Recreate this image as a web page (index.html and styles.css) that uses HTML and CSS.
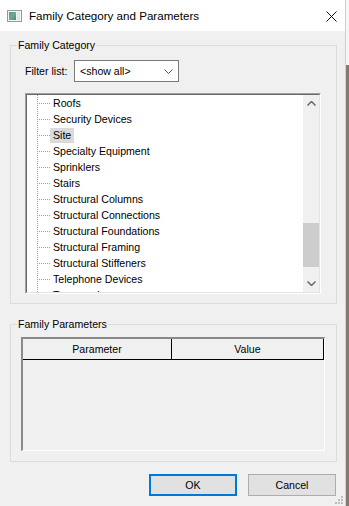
FILE: index.html
```html
<!DOCTYPE html>
<html lang="en">
<head>
    <meta charset="UTF-8">
    <meta name="viewport" content="width=device-width, initial-scale=1.0">
    <title>Family Category and Parameters</title>
    <link rel="stylesheet" href="styles.css">
</head>
<body>
    <div class="dialog">
        <!-- Title bar -->
        <div class="titlebar">
            <svg class="app-icon" width="15" height="12" viewBox="0 0 15 12">
                <defs>
                    <linearGradient id="pic" x1="0" y1="0" x2="1" y2="1">
                        <stop offset="0" stop-color="#4f8fc9"/>
                        <stop offset="0.5" stop-color="#6fae7e"/>
                        <stop offset="1" stop-color="#3f7fb0"/>
                    </linearGradient>
                </defs>
                <rect x="0.5" y="0.5" width="14" height="11" fill="#f4f4f4" stroke="#9a9a9a"/>
                <rect x="2" y="2" width="7" height="8" fill="url(#pic)"/>
                <rect x="10" y="2" width="3" height="8" fill="#dfe6ec"/>
            </svg>
            <span class="title">Family Category and Parameters</span>
            <svg class="close" width="11" height="11" viewBox="0 0 11 11">
                <path d="M0.5 0.5 L10.5 10.5 M10.5 0.5 L0.5 10.5" stroke="#111" stroke-width="1"/>
            </svg>
        </div>

        <div class="content">
            <fieldset class="group group-category">
                <legend>Family Category</legend>
                <div class="filter-row">
                    <label for="filter">Filter list:</label>
                    <div class="select" id="filter">
                        <span>&lt;show all&gt;</span>
                        <svg width="9" height="5" viewBox="0 0 9 5">
                            <path d="M0.5 0.5 L4.5 4.5 L8.5 0.5" fill="none" stroke="#555" stroke-width="1"/>
                        </svg>
                    </div>
                </div>
                <div class="listbox">
                    <div class="listbox-inner">
                        <ul class="tree">
                            <li><span>Roofs</span></li>
                            <li><span>Security Devices</span></li>
                            <li class="selected"><span>Site</span></li>
                            <li><span>Specialty Equipment</span></li>
                            <li><span>Sprinklers</span></li>
                            <li><span>Stairs</span></li>
                            <li><span>Structural Columns</span></li>
                            <li><span>Structural Connections</span></li>
                            <li><span>Structural Foundations</span></li>
                            <li><span>Structural Framing</span></li>
                            <li><span>Structural Stiffeners</span></li>
                            <li><span>Telephone Devices</span></li>
                            <li><span>Topography</span></li>
                        </ul>
                        <div class="scrollbar">
                            <div class="scroll-btn">
                                <svg width="9" height="5" viewBox="0 0 9 5">
                                    <path d="M0.5 4.5 L4.5 0.5 L8.5 4.5" fill="none" stroke="#606060" stroke-width="1.4"/>
                                </svg>
                            </div>
                            <div class="scroll-track">
                                <div class="scroll-thumb"></div>
                            </div>
                            <div class="scroll-btn">
                                <svg width="9" height="5" viewBox="0 0 9 5">
                                    <path d="M0.5 0.5 L4.5 4.5 L8.5 0.5" fill="none" stroke="#606060" stroke-width="1.4"/>
                                </svg>
                            </div>
                        </div>
                    </div>
                </div>
            </fieldset>

            <fieldset class="group group-params">
                <legend>Family Parameters</legend>
                <div class="grid">
                    <div class="grid-header">
                        <div class="cell cell-param">Parameter</div>
                        <div class="cell cell-value">Value</div>
                    </div>
                </div>
            </fieldset>

            <div class="buttons">
                <button class="btn btn-default">OK</button>
                <button class="btn">Cancel</button>
            </div>
        </div>

        <!-- resize grip -->
        <svg class="grip" width="8" height="8" viewBox="0 0 8 8">
            <rect x="6" y="0" width="2" height="2" fill="#bcbcbc"/>
            <rect x="3" y="3" width="2" height="2" fill="#bcbcbc"/>
            <rect x="6" y="3" width="2" height="2" fill="#bcbcbc"/>
            <rect x="0" y="6" width="2" height="2" fill="#bcbcbc"/>
            <rect x="3" y="6" width="2" height="2" fill="#bcbcbc"/>
            <rect x="6" y="6" width="2" height="2" fill="#bcbcbc"/>
        </svg>
    </div>
</body>
</html>
```

FILE: styles.css
```css
/* General styles */
body {
    font-family: "Liberation Sans", Arial, sans-serif;
    font-size: 10.6px;
    color: #000;
    margin: 0;
    padding: 0;
    width: 349px;
    height: 506px;
    overflow: hidden;
    background: linear-gradient(to bottom, #f6f6f6 65px, #857a6e 65px);
}
.dialog {
    position: relative;
    width: 346px;
    height: 506px;
    background: #f0f0f0;
    border-right: 1px solid #d0d0d0;
    box-sizing: border-box;
}

/* Title bar */
.titlebar {
    height: 31px;
    background: #fff;
    display: flex;
    align-items: center;
}
.app-icon {
    margin-left: 7px;
    margin-top: 1px;
}
.title {
    margin-left: 7px;
    font-size: 11.6px;
    flex: 1;
}
.close {
    margin-right: 8px;
    margin-top: 1px;
}

.content {
    padding: 0 8px 0 10px;
}

/* Group boxes */
.group {
    border: 1px solid #dcdcdc;
    margin: 0;
    padding: 0;
    min-width: 0;
}
.group legend {
    margin-left: 6px;
    padding: 0 1px;
    line-height: 15px;
}
.group-category {
    margin-top: 7px;
    padding-bottom: 9px;
}
.group-params {
    margin-top: 13px;
    padding-bottom: 10px;
}

.filter-row {
    display: flex;
    align-items: center;
    margin-top: 7px;
    padding-left: 14px;
}
.filter-row label {
    width: 49px;
}
.select {
    width: 105px;
    height: 22px;
    box-sizing: border-box;
    border: 1px solid #7a7a7a;
    background: #fff;
    display: flex;
    align-items: center;
    justify-content: space-between;
    padding: 0 5px 0 5px;
}

/* Tree list */
.listbox {
    margin: 11px 0 0 14px;
    width: 296px;
    height: 201px;
    box-sizing: border-box;
    border-top: 1px solid #a0a0a0;
    border-left: 1px solid #a0a0a0;
    border-right: 1px solid #fff;
    border-bottom: 1px solid #fff;
}
.listbox-inner {
    height: 100%;
    box-sizing: border-box;
    border-top: 1px solid #696969;
    border-left: 1px solid #696969;
    border-right: 1px solid #e3e3e3;
    border-bottom: 1px solid #e3e3e3;
    display: flex;
    background: #fff;
}
.tree {
    list-style: none;
    margin: 0;
    padding: 0;
    flex: 1;
    overflow: hidden;
    background-image: repeating-linear-gradient(to bottom, #a0a0a0 0 1px, transparent 1px 2px);
    background-size: 1px 100%;
    background-position: 10px 0;
    background-repeat: no-repeat;
}
.tree li {
    height: 16px;
    display: flex;
    align-items: center;
    white-space: nowrap;
}
.tree li::before {
    content: "";
    width: 13px;
    height: 1px;
    margin-left: 10px;
    background-image: repeating-linear-gradient(to right, #a0a0a0 0 1px, transparent 1px 2px);
}
.tree li span {
    padding: 0 3px;
    line-height: 15px;
}
.tree li.selected span {
    background: #dadada;
}

.scrollbar {
    width: 16px;
    background: #f0f0f0;
    display: flex;
    flex-direction: column;
}
.scroll-btn {
    height: 17px;
    display: flex;
    align-items: center;
    justify-content: center;
}
.scroll-track {
    flex: 1;
    padding-top: 111px;
}
.scroll-thumb {
    height: 44px;
    background: #cdcdcd;
}

/* Parameters grid */
.grid {
    margin: 5px 11px 0 10px;
    height: 114px;
    box-sizing: border-box;
    border-top: 2px solid #8a8a8a;
    border-left: 2px solid #8a8a8a;
    border-right: 1px solid #fff;
    border-bottom: 1px solid #fff;
}
.grid-header {
    display: flex;
    height: 21px;
    box-sizing: border-box;
    border-bottom: 1px solid #000;
}
.cell {
    display: flex;
    align-items: center;
    justify-content: center;
    border-right: 1px solid #000;
}
.cell-param {
    width: 149px;
    box-sizing: border-box;
}
.cell-value {
    flex: 1;
}

/* Buttons */
.buttons {
    display: flex;
    justify-content: flex-end;
    gap: 11px;
    margin-top: 12px;
    padding-right: 1px;
}
.btn {
    width: 88px;
    height: 22px;
    font-family: inherit;
    font-size: 10.6px;
    color: #000;
    background: #e1e1e1;
    border: 1px solid #adadad;
    padding: 0;
}
.btn-default {
    border: 2px solid #0078d7;
}

.grip {
    position: absolute;
    right: 2px;
    bottom: 2px;
}
```
